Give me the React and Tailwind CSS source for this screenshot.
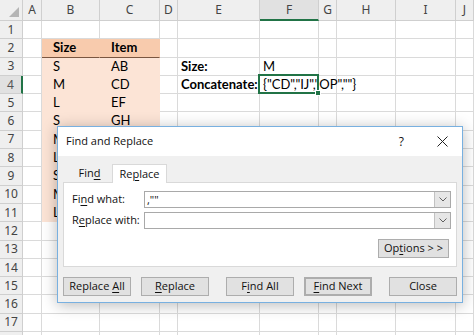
import React from 'react'

const COLS = ['A', 'B', 'C', 'D', 'E', 'F', 'G', 'H', 'I', 'J']
const ROWS = Array.from({ length: 18 }, (_, i) => i + 1)

const data = {
  B2: 'Size', C2: 'Item',
  B3: 'S', C3: 'AB',
  B4: 'M', C4: 'CD',
  B5: 'L', C5: 'EF',
  B6: 'S', C6: 'GH',
  B7: 'M', C7: 'IJ',
  B8: 'L', C8: 'KL',
  B9: 'S', C9: 'MN',
  B10: 'M', C10: 'OP',
  B11: 'L', C11: 'QR',
  E3: 'Size:', F3: 'M',
  E4: 'Concatenate:', F4: '{"CD","IJ","OP",""}',
}

const bold = { B2: 1, C2: 1, E3: 1, E4: 1 }

function Cell({ col, row }) {
  const key = col + row
  const text = data[key]
  const inTable = col === 'B' || col === 'C'
  const head = inTable && row === 2
  const fill = inTable && row >= 3 && row <= 11
  const active = key === 'F4'

  let cls = 'relative flex items-center whitespace-nowrap border-b border-r '
  if (head) cls += 'bg-[#f8cbad] border-r-[#f8cbad] border-b-[#7a5640] '
  else if (fill) cls += 'bg-[#fce4d6] border-[#fce4d6] '
  else cls += 'bg-white border-[#dadada] '
  cls += inTable ? 'pl-[11px] ' : 'pl-[3px] '
  if (bold[key]) cls += 'font-bold '
  if (active) cls += 'z-10 '

  return (
    <div className={cls}>
      {text}
      {active && (
        <div className="absolute -left-[2px] -top-[2px] w-[61px] h-[20px] border-2 border-[#217346]">
          <div className="absolute -right-[4px] -bottom-[4px] w-[6px] h-[6px] bg-[#217346] border border-white" />
        </div>
      )}
    </div>
  )
}

function U({ children }) {
  return <span className="underline underline-offset-2">{children}</span>
}

function Btn({ children, className = '' }) {
  return (
    <div className={'h-[19px] w-[68px] flex items-center justify-center bg-[#e1e1e1] border border-[#adadad] ' + className}>
      <span className="whitespace-pre">{children}</span>
    </div>
  )
}

function Chevron() {
  return (
    <div className="w-[16px] h-full flex items-center justify-center bg-[#e6e6e6] border-l border-[#c2c2c2]">
      <svg width="8" height="5" viewBox="0 0 8 5">
        <path d="M0.5 0.5 L4 4 L7.5 0.5" fill="none" stroke="#606060" strokeWidth="1" />
      </svg>
    </div>
  )
}

function FindReplace() {
  return (
    <div className="absolute left-[57px] top-[126px] w-[406px] h-[177px] flex flex-col bg-[#f0f0f0] border border-[#78b0e0] shadow-[0_2px_14px_rgba(0,0,0,0.28)] font-['Open_Sans',sans-serif] text-[11px] text-[#111]">
      <div className="h-[29px] flex items-center bg-white pl-[8px]">
        <span className="text-[11px]">Find and Replace</span>
        <span className="ml-auto mr-[33px] text-[12px]">?</span>
        <svg width="11" height="11" viewBox="0 0 11 11" className="mr-[14px]">
          <path d="M0.5 0.5 L10.5 10.5 M10.5 0.5 L0.5 10.5" stroke="#222" strokeWidth="1" />
        </svg>
      </div>

      <div className="flex-1 flex flex-col px-[5px] pt-[7px] pb-[6px]">
        <div className="flex items-end h-[19px]">
          <div className="w-[49px] h-[18px] flex items-center justify-center pl-[4px]">
            <span>Fin<U>d</U></span>
          </div>
          <div className="w-[55px] h-[19px] -mb-px flex items-center justify-center bg-white border border-b-0 border-[#d9d9d9] relative z-10">
            <span>Re<U>p</U>lace</span>
          </div>
        </div>

        <div className="h-[85px] flex flex-col bg-white border border-[#d9d9d9] pl-[8px] pr-[5px] pt-[8px]">
          <div className="flex items-center">
            <div className="w-[72px]">Fi<U>n</U>d what:</div>
            <div className="flex h-[17px] flex-1 border border-[#a9a9a9] bg-white">
              <div className="flex-1 flex items-center pl-[2px] leading-none">,""</div>
              <Chevron />
            </div>
          </div>
          <div className="flex items-center mt-[4px]">
            <div className="w-[72px]">R<U>e</U>place with:</div>
            <div className="flex h-[17px] flex-1 border border-[#a9a9a9] bg-white">
              <div className="flex-1" />
              <Chevron />
            </div>
          </div>
          <div className="flex justify-end mt-[10px] pr-[2px]">
            <Btn className="w-[71px]">
              Op<U>t</U>ions &gt; &gt;
            </Btn>
          </div>
        </div>

        <div className="mt-auto flex">
          <Btn>Replace <U>A</U>ll</Btn>
          <Btn className="ml-[10px]"><U>R</U>eplace</Btn>
          <Btn className="ml-[17px]">F<U>i</U>nd All</Btn>
          <Btn className="ml-[10px] border-2 border-[#0078d7]"><U>F</U>ind Next</Btn>
          <Btn className="ml-[17px]">Close</Btn>
        </div>
      </div>
    </div>
  )
}

export default function App() {
  return (
    <div className="relative w-[474px] h-[335px] overflow-hidden bg-white font-['Lato',sans-serif] text-[13px] text-black">
      <div className="grid grid-cols-[23px_19px_58px_60px_18px_82px_59px_18px_59px_60px_1fr] grid-rows-[21px_repeat(18,18.3px)]">
        <div className="relative bg-[#efefef] border-r border-b border-[#cfcfcf]">
          <div className="absolute right-[3px] bottom-[3px] w-0 h-0 border-l-[10px] border-l-transparent border-b-[10px] border-b-[#b5b5b5]" />
        </div>
        {COLS.map((c) =>
          c === 'F' ? (
            <div key={c} className="flex items-center justify-center bg-[#e1e1e1] border-r border-[#cfcfcf] border-b-2 border-b-[#217346] text-[#444] font-['Noto_Sans',sans-serif] text-[12px]">
              {c}
            </div>
          ) : (
            <div key={c} className="flex items-center justify-center bg-[#efefef] border-r border-b border-[#cfcfcf] text-[#444] font-['Noto_Sans',sans-serif] text-[12px]">
              {c}
            </div>
          )
        )}
        {ROWS.map((r) => (
          <React.Fragment key={r}>
            {r === 4 ? (
              <div className="flex items-center justify-center bg-[#e1e1e1] border-b border-[#cfcfcf] border-r-2 border-r-[#217346] text-[#555] font-['Noto_Sans',sans-serif] text-[12px]">
                {r}
              </div>
            ) : (
              <div className="flex items-center justify-center bg-[#efefef] border-r border-b border-[#cfcfcf] text-[#444] font-['Noto_Sans',sans-serif] text-[12px]">
                {r}
              </div>
            )}
            {COLS.map((c) => (
              <Cell key={c + r} col={c} row={r} />
            ))}
          </React.Fragment>
        ))}
      </div>
      <FindReplace />
    </div>
  )
}
